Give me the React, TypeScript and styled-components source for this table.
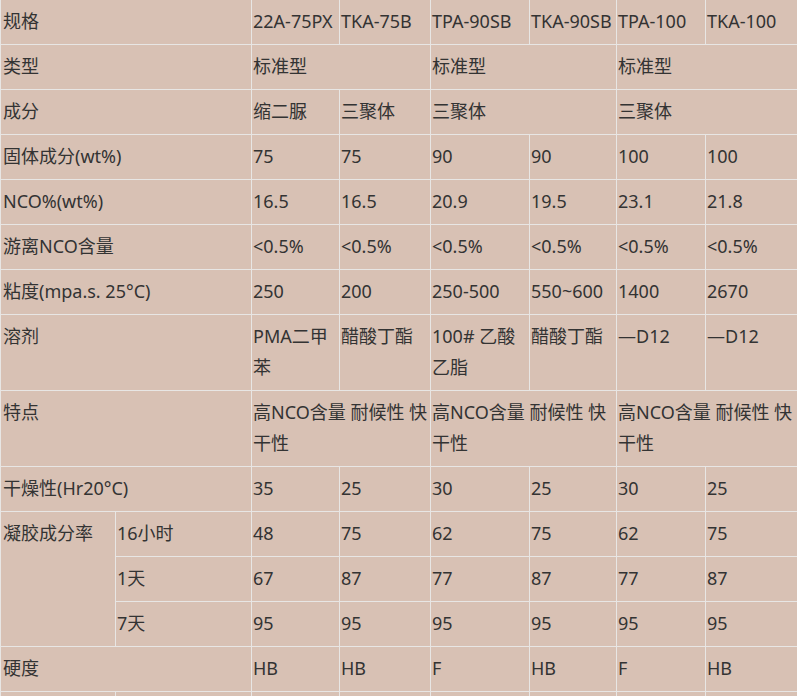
import React from 'react';
import styled, { createGlobalStyle } from 'styled-components';

const GlobalStyle = createGlobalStyle`
    html, body {
        margin: 0;
        padding: 0;
        background: #fff;
    }
`;

type Cell = { text: string; span?: number; rows?: number };
type Row = Cell[];

const blank = '\u00a0';

const rows: Row[] = [
    [{ text: '规格', span: 2 }, { text: '22A-75PX' }, { text: 'TKA-75B' }, { text: 'TPA-90SB' }, { text: 'TKA-90SB' }, { text: 'TPA-100' }, { text: 'TKA-100' }],
    [{ text: '类型', span: 2 }, { text: '标准型', span: 2 }, { text: '标准型', span: 2 }, { text: '标准型', span: 2 }],
    [{ text: '成分', span: 2 }, { text: '缩二脲' }, { text: '三聚体' }, { text: '三聚体', span: 2 }, { text: '三聚体', span: 2 }],
    [{ text: '固体成分(wt%)', span: 2 }, { text: '75' }, { text: '75' }, { text: '90' }, { text: '90' }, { text: '100' }, { text: '100' }],
    [{ text: 'NCO%(wt%)', span: 2 }, { text: '16.5' }, { text: '16.5' }, { text: '20.9' }, { text: '19.5' }, { text: '23.1' }, { text: '21.8' }],
    [{ text: '游离NCO含量', span: 2 }, { text: '<0.5%' }, { text: '<0.5%' }, { text: '<0.5%' }, { text: '<0.5%' }, { text: '<0.5%' }, { text: '<0.5%' }],
    [{ text: '粘度(mpa.s. 25°C)', span: 2 }, { text: '250' }, { text: '200' }, { text: '250-500' }, { text: '550~600' }, { text: '1400' }, { text: '2670' }],
    [{ text: '溶剂', span: 2 }, { text: 'PMA二甲苯' }, { text: '醋酸丁酯' }, { text: '100# 乙酸乙脂' }, { text: '醋酸丁酯' }, { text: '—D12' }, { text: '—D12' }],
    [{ text: '特点', span: 2 }, { text: '高NCO含量 耐候性 快干性', span: 2 }, { text: '高NCO含量 耐候性 快干性', span: 2 }, { text: '高NCO含量 耐候性 快干性', span: 2 }],
    [{ text: '干燥性(Hr20°C)', span: 2 }, { text: '35' }, { text: '25' }, { text: '30' }, { text: '25' }, { text: '30' }, { text: '25' }],
    [{ text: '凝胶成分率', rows: 3 }, { text: '16小时' }, { text: '48' }, { text: '75' }, { text: '62' }, { text: '75' }, { text: '62' }, { text: '75' }],
    [{ text: '1天' }, { text: '67' }, { text: '87' }, { text: '77' }, { text: '87' }, { text: '77' }, { text: '87' }],
    [{ text: '7天' }, { text: '95' }, { text: '95' }, { text: '95' }, { text: '95' }, { text: '95' }, { text: '95' }],
    [{ text: '硬度', span: 2 }, { text: 'HB' }, { text: 'HB' }, { text: 'F' }, { text: 'HB' }, { text: 'F' }, { text: 'HB' }],
    // next row only peeks in at the bottom edge
    [{ text: blank }, { text: blank }, { text: blank }, { text: blank }, { text: blank }, { text: blank }, { text: blank }, { text: blank }],
];

const colWidths = [115, 136, 88, 91, 99, 87, 89, 92];

const Page = styled.div`
    width: 797px;
    height: 696px;
    overflow: hidden;
    background: #fff;
`;

const Table = styled.table`
    width: 797px;
    table-layout: fixed;
    border-collapse: collapse;
    background: #d8c1b4;
    font-family: 'Noto Sans', 'Noto Sans CJK SC', sans-serif;
    font-size: 18px;
    color: #333;
`;

const Td = styled.td<{ $first?: boolean }>`
    padding: 6px 1px 7px;
    line-height: 31px;
    vertical-align: top;
    text-align: left;
    border-right: 1px solid #e8e6e4;
    border-bottom: 1px solid #e8e6e4;
    border-left: ${({ $first }) => ($first ? '1px solid #e8e6e4' : 'none')};
    padding-left: ${({ $first }) => ($first ? '2px' : '1px')};
    overflow: hidden;
`;

export default function App() {
    return (
        <Page>
            <GlobalStyle />
            <Table>
                <colgroup>
                    {colWidths.map((w, i) => (
                        <col key={i} style={{ width: w }} />
                    ))}
                </colgroup>
                <tbody>
                    {rows.map((row, r) => {
                        const startsAtEdge = !(r === 11 || r === 12);
                        return (
                            <tr key={r}>
                                {row.map((cell, c) => (
                                    <Td
                                        key={c}
                                        colSpan={cell.span}
                                        rowSpan={cell.rows}
                                        $first={c === 0 && startsAtEdge}
                                    >
                                        {cell.text}
                                    </Td>
                                ))}
                            </tr>
                        );
                    })}
                </tbody>
            </Table>
        </Page>
    );
}
